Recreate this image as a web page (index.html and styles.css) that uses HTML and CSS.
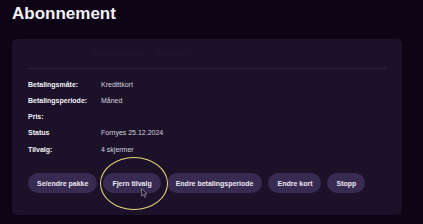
FILE: index.html
```html
<!DOCTYPE html>
<html lang="no">

<head>
    <meta charset="UTF-8">
    <meta name="viewport" content="width=device-width, initial-scale=1.0">
    <title>Abonnement</title>
    <link rel="stylesheet" href="styles.css">
</head>

<body>
    <h1>Abonnement</h1>
    <div class="card">
        <div class="card-head">Ditt abonnement &nbsp; · &nbsp; Premium</div>
        <div class="details">
            <span class="label">Betalingsmåte:</span><span class="value">Kredittkort</span>
            <span class="label">Betalingsperiode:</span><span class="value">Måned</span>
            <span class="label">Pris:</span><span class="value"></span>
            <span class="label">Status</span><span class="value">Fornyes 25.12.2024</span>
            <span class="label">Tilvalg:</span><span class="value">4 skjermer</span>
        </div>
        <div class="actions">
            <button>Se/endre pakke</button>
            <span class="highlight">
                <button>Fjern tilvalg</button>
                <span class="ring"></span>
                <svg class="cursor" width="7" height="10" viewBox="0 0 7 10">
                    <path d="M0.5 0.5 L0.5 8 L2.3 6.3 L3.6 9.3 L4.8 8.8 L3.5 5.9 L6 5.9 Z" fill="#1b1129" stroke="#8d8698" stroke-width="0.8"/>
                </svg>
            </span>
            <button>Endre betalingsperiode</button>
            <button>Endre kort</button>
            <button>Stopp</button>
        </div>
    </div>
</body>

</html>
```

FILE: styles.css
```css
body {
    margin: 0;
    padding: 4px 21px 0 12px;
    background-color: #0d0415;
    color: #f4f1f8;
    font-family: "Liberation Sans", Arial, sans-serif;
}

h1 {
    font-size: 17px;
    line-height: 20px;
    font-weight: bold;
    margin: 0 0 15px;
}

.card {
    background: #1b1129;
    border-radius: 5px;
    padding: 0 16px 22px;
    height: 176px;
    box-sizing: border-box;
}

.card-head {
    height: 29px;
    line-height: 29px;
    font-size: 7px;
    color: #241a33;
    padding-left: 64px;
    border-bottom: 1px solid #2c2340;
}

.details {
    display: grid;
    grid-template-columns: 73px 1fr;
    grid-auto-rows: 16.25px;
    align-items: center;
    font-size: 7px;
    margin-top: 7px;
}

.label {
    font-weight: bold;
    color: #f4f1f8;
}

.value {
    color: #d6d1dd;
}

.actions {
    display: flex;
    gap: 6px;
    margin-top: 16px;
}

button {
    font: inherit;
    font-size: 7px;
    font-weight: bold;
    height: 20px;
    padding: 0 9px;
    border: none;
    border-radius: 10px;
    background: #382b51;
    color: #ece8f2;
    cursor: pointer;
}

.highlight {
    position: relative;
    display: flex;
}

.ring {
    position: absolute;
    left: -3px;
    top: -16px;
    width: 68px;
    height: 53px;
    border: 1.5px solid #e6d779;
    border-radius: 50%;
    box-sizing: border-box;
}

.cursor {
    position: absolute;
    left: 38px;
    top: 15px;
}
```
